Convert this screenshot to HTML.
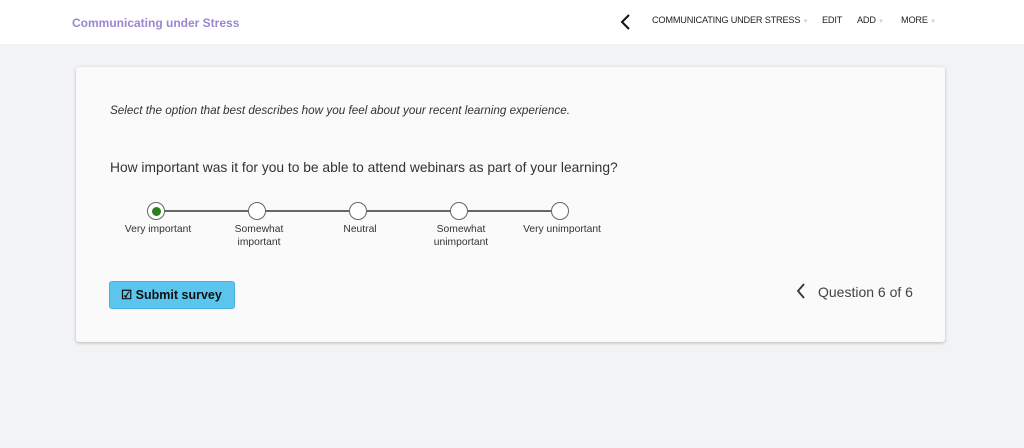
<!DOCTYPE html>
<html><head><style>
body{margin:0;width:1024px;height:448px;background:#f2f3f5;font-family:"Liberation Sans",sans-serif;position:relative;overflow:hidden}
.hdr{position:absolute;left:0;top:0;width:1024px;height:44px;background:#fff}
.t{position:absolute;left:72px;top:16px;font-size:12px;font-weight:bold;color:#9a87cf}
.nav{position:absolute;top:15px;font-size:9.2px;color:#222;white-space:nowrap;letter-spacing:-0.2px}
.car{color:#ccc;font-size:6px}
.card{position:absolute;left:76px;top:67px;width:869px;height:275px;background:#fafafa;border-radius:3px;box-shadow:0 1px 3px rgba(0,0,0,.25)}
.a{position:absolute;font-size:11px;color:#333;white-space:nowrap}
.c{position:absolute;top:202px;width:16px;height:16px;border:1.5px solid #666;border-radius:50%;background:#fff;box-sizing:content-box}
.lb{position:absolute;top:223px;width:100px;text-align:center;font-size:10.3px;color:#333;line-height:13px}
</style></head><body>
<div class="hdr">
<div class="t">Communicating under Stress</div>
<svg style="position:absolute;left:619px;top:13px" width="12" height="18"><path d="M10 2 L3 9 L10 16" stroke="#111" stroke-width="2" fill="none"/></svg>
<div class="nav" style="left:652px">COMMUNICATING UNDER STRESS <span class="car">▼</span></div>
<div class="nav" style="left:822px">EDIT</div>
<div class="nav" style="left:857px">ADD <span class="car">▼</span></div>
<div class="nav" style="left:901px">MORE <span class="car">▼</span></div>
</div>
<div class="card"></div>
<div class="a" style="left:110px;top:104px;font-style:italic;font-size:11.7px">Select the option that best describes how you feel about your recent learning experience.</div>
<div class="a" style="left:110px;top:160px;font-size:13.8px">How important was it for you to be able to attend webinars as part of your learning?</div>
<div style="position:absolute;left:156px;top:210px;width:404px;height:1.5px;background:#666"></div>
<div class="c" style="left:147px"><div style="margin:3.5px;width:9px;height:9px;border-radius:50%;background:#2e7d1e"></div></div>
<div class="c" style="left:248px"></div>
<div class="c" style="left:349px"></div>
<div class="c" style="left:450px"></div>
<div class="c" style="left:551px"></div>
<div class="lb" style="left:108px">Very important</div>
<div class="lb" style="left:209px">Somewhat<br>important</div>
<div class="lb" style="left:310px">Neutral</div>
<div class="lb" style="left:411px">Somewhat<br>unimportant</div>
<div class="lb" style="left:512px">Very unimportant</div>
<div style="position:absolute;left:109px;top:281px;width:126px;height:28px;background:#5bc5ee;border:1px solid #48b0dc;border-radius:3px;box-sizing:border-box;font-size:12.5px;font-weight:bold;color:#111;line-height:26px;padding-left:11px">☑ Submit survey</div>
<svg style="position:absolute;left:796px;top:283px" width="10" height="16"><path d="M8 1 L2 8 L8 15" stroke="#333" stroke-width="1.8" fill="none"/></svg>
<div class="a" style="left:818px;top:284px;font-size:14px;color:#444">Question 6 of 6</div>
</body></html>
